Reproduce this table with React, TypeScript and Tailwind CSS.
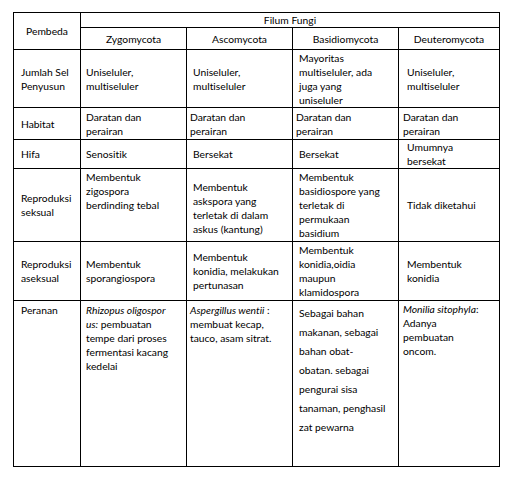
import React from 'react';

type Line = React.ReactNode;

interface CellProps {
  lines: Line[];
  align?: 'top' | 'center';
  pad?: string;
  center?: boolean;
  leading?: string;
  span?: string;
}

function Cell({ lines, align = 'center', pad = 'pl-[6px]', center = false, leading = 'leading-[14px]', span = '' }: CellProps) {
  return (
    <div
      className={`bg-white flex flex-col ${align === 'top' ? 'justify-start' : 'justify-center'} ${center ? 'items-center' : 'items-start'} ${pad} ${span}`}
    >
      {lines.map((line, i) => (
        <span key={i} className={`block whitespace-nowrap ${leading}`}>
          {line}
        </span>
      ))}
    </div>
  );
}

export default function App() {
  return (
    <div className="min-h-[478px] w-[512px] bg-white pt-[12px] pl-[13px] text-[10.3px] text-black [font-family:Lato,sans-serif] [font-variant-ligatures:none]">
      <div className="grid w-[487px] grid-cols-[66px_105px_105px_105px_100px] grid-rows-[14px_21px_57px_31px_28px_72px_58px_165px] gap-px bg-black p-px">
        {/* header */}
        <Cell lines={['Pembeda']} center pad="" span="row-span-2" />
        <Cell lines={['Filum Fungi']} center pad="pb-[1px]" span="col-span-4" />
        <Cell lines={['Zygomycota']} center pad="" />
        <Cell lines={['Ascomycota']} center pad="" />
        <Cell lines={['Basidiomycota']} center pad="" />
        <Cell lines={['Deuteromycota']} center pad="" />

        {/* Jumlah sel */}
        <Cell lines={['Jumlah Sel', 'Penyusun']} pad="pl-[7px]" />
        <Cell lines={['Uniseluler,', 'multiseluler']} pad="pl-[5px]" />
        <Cell lines={['Uniseluler,', 'multiseluler']} pad="pl-[6px]" />
        <Cell lines={['Mayoritas', 'multiseluler, ada', 'juga yang', 'uniseluler']} pad="pl-[6px]" />
        <Cell lines={['Uniseluler,', 'multiseluler']} pad="pl-[8px]" />

        {/* Habitat */}
        <Cell lines={['Habitat']} pad="pl-[7px]" />
        <Cell lines={['Daratan dan', 'perairan']} pad="pl-[5px]" />
        <Cell lines={['Daratan dan', 'perairan']} pad="pl-[3px]" />
        <Cell lines={['Daratan dan', 'perairan']} pad="pl-[3px]" />
        <Cell lines={['Daratan dan', 'perairan']} pad="pl-[4px]" />

        {/* Hifa */}
        <Cell lines={['Hifa']} pad="pl-[7px]" />
        <Cell lines={['Senositik']} pad="pl-[5px]" />
        <Cell lines={['Bersekat']} pad="pl-[6px]" />
        <Cell lines={['Bersekat']} pad="pl-[6px]" />
        <Cell lines={['Umumnya', 'bersekat']} pad="pl-[8px]" />

        {/* Reproduksi seksual */}
        <Cell lines={['Reproduksi', 'seksual']} pad="pl-[7px]" />
        <Cell lines={['Membentuk', 'zigospora', 'berdinding tebal']} align="top" pad="pl-[5px] pt-[1px]" />
        <Cell lines={['Membentuk', 'askspora yang', 'terletak di dalam', 'askus (kantung)']} pad="pl-[6px] pt-[6px]" />
        <Cell lines={['Membentuk', 'basidiospore yang', 'terletak di', 'permukaan', 'basidium']} pad="pl-[6px]" />
        <Cell lines={['Tidak diketahui']} pad="pl-[8px]" />

        {/* Reproduksi aseksual */}
        <Cell lines={['Reproduksi', 'aseksual']} pad="pl-[7px]" />
        <Cell lines={['Membentuk', 'sporangiospora']} pad="pl-[5px]" />
        <Cell lines={['Membentuk', 'konidia, melakukan', 'pertunasan']} pad="pl-[6px]" />
        <Cell lines={['Membentuk', 'konidia,oidia', 'maupun', 'klamidospora']} pad="pl-[6px]" />
        <Cell lines={['Membentuk', 'konidia']} pad="pl-[8px]" />

        {/* Peranan */}
        <Cell lines={['Peranan']} align="top" pad="pl-[7px] pt-[2px]" />
        <Cell
          lines={[
            <i>Rhizopus oligospor</i>,
            <>
              <i>us:</i> pembuatan
            </>,
            'tempe dari proses',
            'fermentasi kacang',
            'kedelai',
          ]}
          align="top"
          pad="pl-[5px] pt-[2px]"
        />
        <Cell
          lines={[
            <>
              <i>Aspergillus wentii</i> :
            </>,
            'membuat kecap,',
            'tauco, asam sitrat.',
          ]}
          align="top"
          pad="pl-[3px] pt-[2px]"
        />
        <Cell
          lines={[
            'Sebagai bahan',
            'makanan, sebagai',
            'bahan obat-',
            'obatan. sebagai',
            'pengurai sisa',
            'tanaman, penghasil',
            'zat pewarna',
          ]}
          align="top"
          leading="leading-[19px]"
          pad="pl-[6px] pt-[3px]"
        />
        <Cell
          lines={[
            <>
              <i>Monilia sitophyla</i>:
            </>,
            'Adanya',
            'pembuatan',
            'oncom.',
          ]}
          align="top"
          pad="pl-[4px] pt-[1px]"
        />
      </div>
    </div>
  );
}
